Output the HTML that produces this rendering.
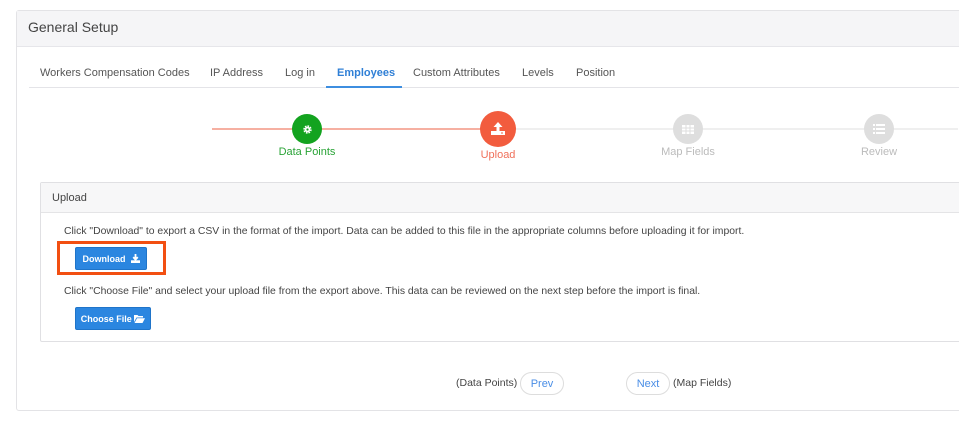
<!DOCTYPE html>
<html><head><style>
*{box-sizing:border-box;margin:0;padding:0}
body{width:973px;height:428px;background:#fff;font-family:"Liberation Sans",sans-serif;position:relative;overflow:hidden;color:#333}
.clip{position:absolute;left:0;top:0;width:959px;height:428px;overflow:hidden}
.a{position:absolute}
.card{left:16px;top:10px;width:980px;height:401px;border:1px solid #e3e3e6;border-radius:3px}
.hdr{left:17px;top:11px;width:980px;height:36px;background:#f5f5f7;border-bottom:1px solid #e6e6ea}
.t{font-size:11px;color:#555;top:67px}
.step{border-radius:50%;display:flex;align-items:center;justify-content:center}
.lbl{font-size:11px;transform:translateX(-50%)}
.btn{background:#2b86e0;color:#fff;font-size:9px;font-weight:bold;border-radius:2px;display:flex;align-items:center;justify-content:center;border:1px solid #1f74c9}
.pill{border:1px solid #ddd;border-radius:12px;color:#4a8ee6;font-size:11px;display:flex;align-items:center;justify-content:center;height:23px}
.p{font-size:10.4px;color:#444;white-space:nowrap}
</style></head><body>
<div class="clip">
<div class="a card"></div>
<div class="a hdr"></div>
<div class="a" style="left:28px;top:19px;font-size:14px;color:#444">General Setup</div>
<div class="a" style="left:29px;top:87px;width:944px;height:1px;background:#e4e4e8"></div>
<div class="a t" style="left:40px">Workers Compensation Codes</div>
<div class="a t" style="left:210px">IP Address</div>
<div class="a t" style="left:285px">Log in</div>
<div class="a t" style="left:337px;color:#2f7fd6;font-weight:bold">Employees</div>
<div class="a" style="left:326px;top:86px;width:76px;height:2px;background:#3d8ee0"></div>
<div class="a t" style="left:413px">Custom Attributes</div>
<div class="a t" style="left:522px">Levels</div>
<div class="a t" style="left:576px">Position</div>

<div class="a" style="left:212px;top:128px;width:286px;height:2px;background:#f6b0a2"></div>
<div class="a" style="left:498px;top:128px;width:460px;height:2px;background:#efefef"></div>
<div class="a step" style="left:292px;top:114px;width:30px;height:30px;background:#13a31f">
<svg width="11" height="11" viewBox="0 0 12 12"><circle cx="6" cy="6" r="3.4" fill="none" stroke="#fff" stroke-width="2.4" stroke-dasharray="1.6 1"/><circle cx="6" cy="6" r="3" fill="#fff"/><circle cx="6" cy="6" r="1.2" fill="#13a31f"/></svg></div>
<div class="a lbl" style="left:307px;top:146px;color:#29a336">Data Points</div>
<div class="a step" style="left:480px;top:111px;width:36px;height:36px;background:#f25c3e">
<svg width="16" height="14" viewBox="0 0 16 14"><path d="M8 0L3.5 5H6.5V9H9.5V5H12.5Z" fill="#fff"/><rect x="1" y="9" width="14" height="4" fill="#fff"/><rect x="11" y="10.5" width="2" height="1" fill="#f25c3e"/></svg></div>
<div class="a lbl" style="left:498px;top:149px;color:#f0705a">Upload</div>
<div class="a step" style="left:673px;top:114px;width:30px;height:30px;background:#dedede">
<svg width="12" height="9" viewBox="0 0 12 9"><path d="M0 0h12v9H0z" fill="#fff"/><path d="M4 0v9M8 0v9M0 3h12M0 6h12" stroke="#dedede" stroke-width="1"/></svg></div>
<div class="a lbl" style="left:688px;top:146px;color:#bbb">Map Fields</div>
<div class="a step" style="left:864px;top:114px;width:30px;height:30px;background:#dedede">
<svg width="12" height="10" viewBox="0 0 12 10"><path d="M0 1h2M3 1h9M0 5h2M3 5h9M0 9h2M3 9h9" stroke="#fff" stroke-width="2"/></svg></div>
<div class="a lbl" style="left:879px;top:146px;color:#bbb">Review</div>

<div class="a" style="left:40px;top:182px;width:940px;height:160px;border:1px solid #e0e0e3;border-radius:2px"></div>
<div class="a" style="left:41px;top:183px;width:940px;height:30px;background:#f7f7f8;border-bottom:1px solid #e4e4e6"></div>
<div class="a" style="left:52px;top:192px;font-size:11px;color:#444">Upload</div>
<div class="a p" style="left:64px;top:226px">Click "Download" to export a CSV in the format of the import. Data can be added to this file in the appropriate columns before uploading it for import.</div>
<div class="a btn" style="left:75px;top:247px;width:72px;height:23px">Download&nbsp;&nbsp;<svg width="9" height="9" viewBox="0 0 10 10"><path d="M5 0v5M2.5 3.5L5 6.3 7.5 3.5" stroke="#fff" stroke-width="2" fill="none"/><rect x="0" y="7" width="10" height="3" fill="#fff"/></svg></div>
<div class="a" style="left:57px;top:241px;width:109px;height:34px;border:3px solid #f24f12"></div>
<div class="a p" style="left:64px;top:286px">Click "Choose File" and select your upload file from the export above. This data can be reviewed on the next step before the import is final.</div>
<div class="a btn" style="left:75px;top:307px;width:76px;height:23px">Choose File&nbsp;<svg width="11" height="9" viewBox="0 0 11 9"><path d="M0 1h3.5l1 1H9v1.5H2.5L0 8zM3 4.3h8L8.5 9H0.5z" fill="#fff"/></svg></div>

<div class="a" style="left:456px;top:377px;font-size:10.5px;color:#444">(Data Points)</div>
<div class="a pill" style="left:520px;top:372px;width:44px">Prev</div>
<div class="a pill" style="left:626px;top:372px;width:44px">Next</div>
<div class="a" style="left:673px;top:377px;font-size:10.5px;color:#444">(Map Fields)</div>
</div>
</body></html>
